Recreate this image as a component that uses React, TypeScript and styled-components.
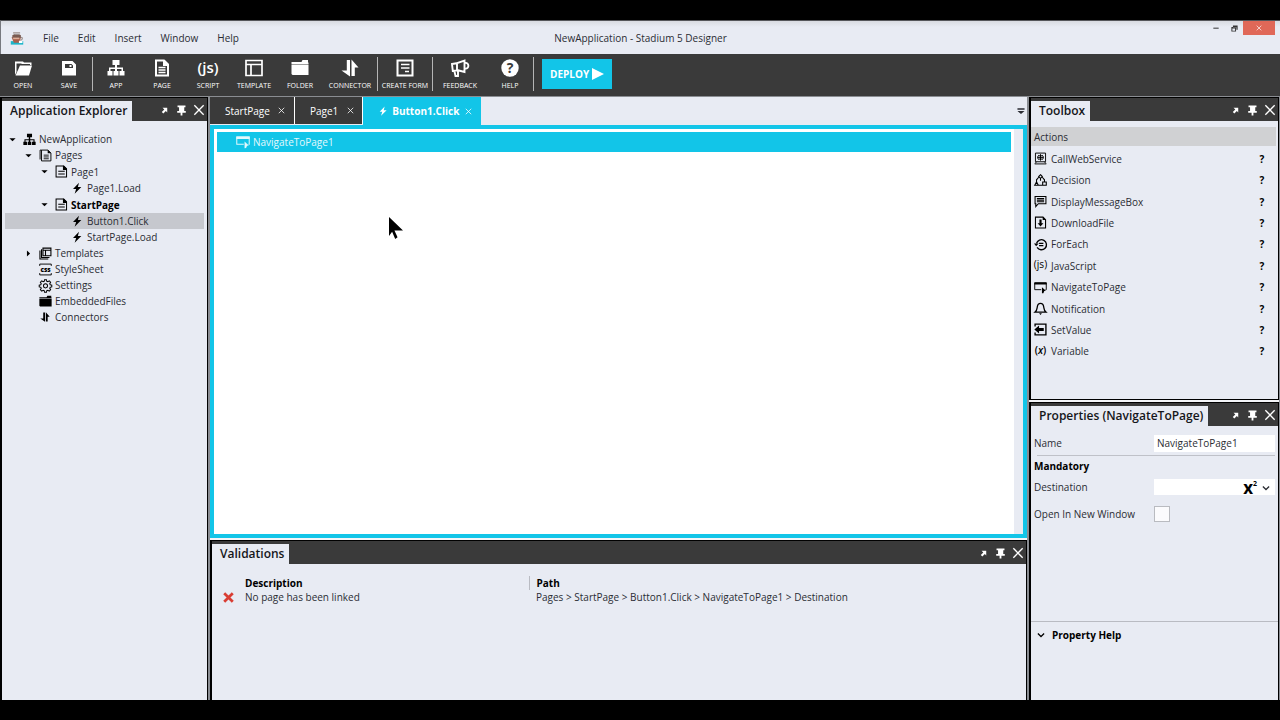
import React from 'react';
import styled, { createGlobalStyle, css } from 'styled-components';

const C = {
  bg: '#e8ebf3',
  dark: '#3a3a3a',
  cyan: '#12c5e8',
  text: '#2b2d33',
  select: '#c6c8ce',
};

const GlobalStyle = createGlobalStyle`
  *, *::before, *::after { box-sizing: border-box; }
  body {
    margin: 0;
    background: #000;
    color: ${C.text};
    font-family: 'Open Sans', 'Noto Sans', sans-serif;
    font-size: 10px;
    line-height: 16px;
  }
  button, input, select { font: inherit; color: inherit; margin: 0; }
  button { border: 0; padding: 0; background: none; cursor: pointer; }
  svg { display: block; flex: none; overflow: visible; }
`;

/* ---------- icons ---------- */

type IconName =
  | 'open' | 'save' | 'app' | 'page' | 'sheet' | 'template' | 'folder' | 'connector' | 'form'
  | 'feedback' | 'help' | 'pages' | 'templates' | 'css' | 'gear' | 'bolt' | 'web'
  | 'decision' | 'message' | 'download' | 'foreach' | 'js' | 'navigate' | 'bell'
  | 'setvalue' | 'variable' | 'close' | 'pin' | 'popout' | 'down' | 'right'
  | 'chevron' | 'play' | 'cup' | 'minimize' | 'restore' | 'overflow' | 'error' | 'pointer';

const line = { fill: 'none', stroke: 'currentColor' } as const;
const glyph = { fill: 'currentColor', textAnchor: 'middle' } as const;

const shapes: Record<IconName, React.ReactNode> = {
  open: <><path d="M1 16V2.500h8l1 1h7.500V6H16V5H8L7 4.500H2.500V13z" /><path d="M6 6.500h12l-3 10H1.500z" /></>,
  save: <path fillRule="evenodd" d="M2 2h10.500L16 5.500V16.500H2zM5 5v4h8V6.500L11.500 5z M9.500 6h2v2h-2z" />,
  app: <path d="M5.500 1h7v5H10v2.500h6V12h1.500v4.500h-5V12h2v-2H10v2h1.500v4.500h-5V12H8v-2H3.500v2h2v4.500h-5V12H2V8.500h6V6H5.500z" />,
  page: <><path {...line} strokeWidth="2" d="M3 1.500h8l4 4v11H3z" /><path d="M10 1h1.500L16 5.500V7h-6z" /><path {...line} strokeWidth="1.500" d="M5.500 8.500h7M5.500 11h7M5.500 13.500h7" /></>,
  sheet: <><path {...line} strokeWidth="1.400" d="M1.500 1.500h10.500l4 4v11H1.500z" /><path d="M11 1h1.500L16.500 5v2H11z" /><path {...line} strokeWidth="1.400" d="M4.500 8.500h9M4.500 12.500h9" /></>,
  template: <path {...line} strokeWidth="1.700" d="M1 1.500h16v15H1zM1 5.500h16M6 5.500v11" />,
  folder: <path d="M0.500 3h10l1-2H17v2.500h.5V5H.5zM.5 5.500h17V16H1.500L.5 15z" />,
  connector: <path d="M5.800 1h3.200v16.500L.5 11.500h5.300zM10.500 17V.5l7 8h-3.700V17z" />,
  form: <><path {...line} strokeWidth="2" d="M1.500 1.500h15v15h-15z" /><path {...line} strokeWidth="1.700" d="M5 5.500h8.500M5 9h8.500M9 12.500h4" /></>,
  feedback: <><path {...line} strokeWidth="1.900" d="M1 5l5-.8v7.300L1.800 12zM6 4.200L13.500 1.500v11.500L6 11M3.500 12.500l1 4.500h2.500V12" /><path {...line} strokeWidth="1.900" d="M14 4c4.500-1 4.500 6.500 0 5.500" /></>,
  help: <><circle cx="9" cy="9" r="8.700" /><text x="9" y="14" textAnchor="middle" fontSize="14" fontWeight="700" fill={C.dark}>?</text></>,
  pages: <><path {...line} strokeWidth="1.300" d="M1.500 14.500v-13h2M3.500 16.500v-15h9l4 4v11z" /><path d="M12 1.500l4.500 4.500H12z" /><path {...line} strokeWidth="1.200" d="M6.500 8.500h7M6.500 11h7M6.500 13.500h7" /></>,
  templates: <path {...line} strokeWidth="1.500" d="M5.500 1.500h11v10.500h-11zM5.500 4.500h11M9 4.500v7.500M3.500 3v11.500h11M1.300 5v11.700h11.500" />,
  css: <><path {...line} strokeWidth="1.300" d="M1 4V1.500h16V4M1 14v2.500h16V14" /><text x="9" y="12" {...glyph} fontSize="9" fontWeight="800">css</text></>,
  gear: <><path {...line} strokeWidth="1.400" d="M7.700 1h2.600l.5 2.200 1.500.6 1.900-1.200 1.900 1.900-1.200 1.900.6 1.500 2.200.5v2.600l-2.200.5-.6 1.500 1.200 1.900-1.900 1.900-1.900-1.200-1.500.6-.5 2.200H7.700l-.5-2.200-1.500-.6-1.900 1.200-1.900-1.900 1.200-1.900-.6-1.500L.3 11V8.400l2.200-.5.6-1.500-1.200-1.900 1.900-1.900 1.900 1.200 1.500-.6z" /><circle {...line} strokeWidth="1.400" cx="9" cy="9.500" r="2.800" /></>,
  bolt: <path d="M12 1L3 10.500h4.700L5.500 17.500 15.500 7.500h-5.200z" />,
  web: <path {...line} strokeWidth="1.300" d="M2 1.500h14v12H2zM1 16.500h16M3.500 13.500L1.500 16M14.500 13.500l2 2.500M5 7.500h8M9 3v9M6 5.200h6M6 9.800h6M6.500 4.500c-2 2-2 4 0 6M11.500 4.500c2 2 2 4 0 6" />,
  decision: <path {...line} strokeWidth="1.500" d="M9 1l2.500 2.500L9 6 6.500 3.500zM9 6v3.500M6.500 4.500L3.500 8v3M11.500 4.500l3 3.500v3M1 15.500l2.500-4.500L6 15.500zM12 11h5v4.500h-5zM6 15.500h6" />,
  message: <path {...line} strokeWidth="1.500" d="M1.500 2h15v10H6l-3.500 4v-4h-1zM4 5h10M4 7.200h10M4 9.400h10" />,
  download: <><path {...line} strokeWidth="1.500" d="M2 1.500h10.500L16 5v11.500H2z" /><path d="M12 1l4.500 4.500H12zM7.500 5h3v5H13l-4 4.500L5 10h2.500z" /></>,
  foreach: <><path {...line} strokeWidth="1.900" d="M3.500 7.500a7 7 0 1 1 .8 5.500M7 7.500h6M7 10.500h6" /><path d="M0 7.500h6.500L3 11.500z" /></>,
  js: <text x="9" y="13" {...glyph} fontSize="14">(js)</text>,
  navigate: <><path {...line} strokeWidth="1.300" d="M10 12H1V2.500h16V12h-1" /><path d="M.5 2h17v3H.5zM11 8.500l5.500 5-2.300.3-1.200 3-2 .2z" /></>,
  bell: <><path {...line} strokeWidth="1.800" d="M1.500 14C4 12 4 10 4.500 7 5 3.500 7 2 9 2s4 1.500 4.500 5c.5 3 .5 5 3 7z" /><path d="M7 15.500h4l-2 2.500z" /></>,
  setvalue: <><path {...line} strokeWidth="1.900" d="M1.500 5V1.500h15v15h-15V13" /><path d="M.5 9L7 3.500V7h6.500v4H7v3.500z" /></>,
  variable: <text x="9" y="13" {...glyph} fontSize="14" fontWeight="600">(<tspan fontStyle="italic">x</tspan>)</text>,
  close: <path {...line} strokeWidth="2" d="M2 2l14 14M16 2L2 16" />,
  pin: <path d="M2.500 1h13v2.500H13.500V10H16v2.500H10.500V17h-3v-4.500H2V10h3V3.500H2.500z" />,
  popout: <path d="M4 2h12v12l-3.500-3.500L6 17l-4-4 6.500-6.500z" />,
  down: <path d="M1 5.500h16l-8 8z" />,
  right: <path d="M5 1l8 8-8 8z" />,
  chevron: <path {...line} strokeWidth="2.800" d="M2 5.500l7 7 7-7" />,
  play: <path d="M0 0l18 9-18 9z" />,
  cup: <><path fill="#1bb5c9" d="M1 13h16v4.500H1z" /><path fill="#a8604c" d="M2 8h12l-1.500 7H5z" /><path fill="#7a5a50" d="M3 5.500c3-2 8-2 11 0V9H3z" /><path fill="#dfae98" d="M4 8.500h8v2H4z" /><path {...line} stroke="#9b8f8c" strokeWidth="1.500" d="M4 2.500h9M6 4.500h6M14 8c3 0 2 4-1 4" /><path fill="#fff" d="M11.500 12.500h4.500v3h-4.500z" /></>,
  minimize: <path d="M1 8h16v3H1z" />,
  restore: <path fillRule="evenodd" d="M5 1h12v11h-3V6H5zM1 5h12v12H1zM3.500 9v5.500h7V9z" />,
  overflow: <path d="M1 3h16v3H1zM1 9h16l-8 7z" />,
  error: <path {...line} strokeWidth="4.500" d="M2 2l14 14M16 2L2 16" />,
  pointer: <path d="M0 0v15.500l4-3.500 4 6 3-1.500-4-5.500H18z" />,
};

const Icon = ({ name, size = 13, height }: { name: IconName; size?: number; height?: number }) => (
  <svg width={size} height={height ?? size} viewBox="0 0 18 18" preserveAspectRatio="none" fill="currentColor" aria-hidden="true">
    {shapes[name]}
  </svg>
);

/* ---------- window frame ---------- */

const Window = styled.div`
  min-height: 100vh;
  padding: 20px 0;
  display: flex;
  flex-direction: column;
`;

const TitleBar = styled.header`
  height: 34px;
  display: grid;
  grid-template-columns: 1fr auto 1fr;
  align-items: center;
  background: linear-gradient(#d9dbe1, ${C.bg} 6px);
  border-top: 1px solid #55565a;
  border-left: 1px solid #77797f;
`;

const Menu = styled.nav`
  display: flex;
  align-items: center;
  gap: 19px;
  padding-left: 9px;
`;

const MenuItem = styled.button``;

const AppTitle = styled.h1`
  margin: 0;
  font-size: 10px;
  font-weight: 400;
`;

const WindowButtons = styled.div`
  align-self: start;
  justify-self: end;
  display: flex;
  margin-right: 5px;
`;

const WindowButton = styled.button<{ $danger?: boolean }>`
  width: ${p => (p.$danger ? 32 : 18)}px;
  height: 14px;
  display: grid;
  place-items: center;
  background: ${p => (p.$danger ? '#e06858' : 'none')};
  color: ${p => (p.$danger ? '#fff' : '#333')};
`;

const Toolbar = styled.div`
  height: 42px;
  padding-top: 3px;
  display: flex;
  align-items: flex-start;
  background: ${C.dark};
  color: #fff;
`;

const Tool = styled.button<{ $wide?: boolean }>`
  width: ${p => (p.$wide ? 54 : 46)}px;
  height: 36px;
  padding-top: 2px;
  display: flex;
  flex-direction: column;
  align-items: center;
  gap: 4px;
  font-size: 7px;
  line-height: 10px;
  white-space: nowrap;
`;

const ToolGlyph = styled.span`
  height: 18px;
  font-size: 15px;
  font-weight: 600;
  line-height: 16px;
`;

const ToolSeparator = styled.span`
  width: 1px;
  height: 34px;
  background: #b5b5b5;
`;

const Deploy = styled.button`
  height: 30px;
  margin: 2px 0 0 8px;
  padding: 0 8px;
  display: flex;
  align-items: center;
  gap: 3px;
  background: ${C.cyan};
  font-weight: 700;
`;

const Workspace = styled.div`
  flex: 1;
  display: grid;
  grid-template-columns: 208px minmax(0, 1fr) 250px;
  gap: 2px;
  padding-right: 1px;
  background: #8a8d92;
  border-top: 1px solid #8a8d92;
`;

const Column = styled.div`
  display: flex;
  flex-direction: column;
  gap: 2px;
  min-width: 0;
  background: #f4f5f8;
`;

/* ---------- panels ---------- */

const PanelBox = styled.section<{ $height?: number; $closed?: boolean }>`
  ${p => (p.$height ? css`height: ${p.$height}px;` : css`flex: 1;`)}
  display: flex;
  flex-direction: column;
  background: ${C.bg};
  border: 1px solid #000;
  border-left-width: 2px;
  border-bottom-width: ${p => (p.$closed ? 1 : 0)}px;
`;

const PanelHead = styled.div`
  height: 23px;
  padding-top: 3px;
  display: flex;
  align-items: flex-start;
  background: ${C.dark};
  color: #fff;
`;

const PanelTitle = styled.h2`
  margin: 0 auto 0 0;
  padding: 0 5px 0 8px;
  background: ${C.bg};
  color: #15161a;
  font-size: 12px;
  font-weight: 600;
  line-height: 20px;
  white-space: nowrap;
`;

const PanelButton = styled.button`
  width: 17px;
  height: 18px;
  display: grid;
  place-items: center;
`;

const Panel = ({ title, height, closed, children }: { title: string; height?: number; closed?: boolean; children: React.ReactNode }) => (
  <PanelBox $height={height} $closed={closed}>
    <PanelHead>
      <PanelTitle>{title}</PanelTitle>
      <PanelButton aria-label="Float"><Icon name="popout" size={7} /></PanelButton>
      <PanelButton aria-label="Pin"><Icon name="pin" size={11} /></PanelButton>
      <PanelButton aria-label="Close"><Icon name="close" size={12} /></PanelButton>
    </PanelHead>
    {children}
  </PanelBox>
);

/* ---------- application explorer ---------- */

const Tree = styled.ul`
  list-style: none;
  margin: 0;
  padding: 10px 3px 0;
`;

const TreeRow = styled.li<{ $level: number; $selected?: boolean; $bold?: boolean; $tall?: boolean }>`
  height: ${p => (p.$tall ? 17 : 16)}px;
  padding-left: ${p => p.$level * 16}px;
  display: flex;
  align-items: center;
  background: ${p => (p.$selected ? C.select : 'none')};
  font-weight: ${p => (p.$bold ? 700 : 400)};
  color: ${p => (p.$bold ? '#000' : C.text)};
`;

const TreeArrow = styled.span`
  width: 14px;
  display: grid;
  place-items: center;
  color: #000;
`;

const TreeIcon = styled.span`
  width: 20px;
  display: grid;
  place-items: center;
  color: #000;
`;

type Node = { label: string; icon: IconName; level: number; arrow?: 'down' | 'right'; bold?: boolean; selected?: boolean };

const nodes: Node[] = [
  { label: 'NewApplication', icon: 'app', level: 0, arrow: 'down' },
  { label: 'Pages', icon: 'pages', level: 1, arrow: 'down' },
  { label: 'Page1', icon: 'sheet', level: 2, arrow: 'down' },
  { label: 'Page1.Load', icon: 'bolt', level: 3 },
  { label: 'StartPage', icon: 'sheet', level: 2, arrow: 'down', bold: true },
  { label: 'Button1.Click', icon: 'bolt', level: 3, selected: true },
  { label: 'StartPage.Load', icon: 'bolt', level: 3 },
  { label: 'Templates', icon: 'templates', level: 1, arrow: 'right' },
  { label: 'StyleSheet', icon: 'css', level: 1 },
  { label: 'Settings', icon: 'gear', level: 1 },
  { label: 'EmbeddedFiles', icon: 'folder', level: 1 },
  { label: 'Connectors', icon: 'connector', level: 1 },
];

const treeIconSize = (icon: IconName) => (icon === 'bolt' ? 12 : icon === 'connector' ? 10 : 13);

/* ---------- editor ---------- */

const TabStrip = styled.div`
  height: 28px;
  display: flex;
  align-items: center;
  background: ${C.bg};
`;

const Tab = styled.div<{ $active?: boolean }>`
  height: ${p => (p.$active ? 28 : 27)}px;
  align-self: start;
  padding: 0 7px 0 15px;
  display: flex;
  align-items: center;
  gap: ${p => (p.$active ? 4 : 7)}px;
  border-right: 1px solid ${p => (p.$active ? C.cyan : '#fff')};
  background: ${p => (p.$active ? C.cyan : C.dark)};
  color: #fff;
  font-weight: ${p => (p.$active ? 700 : 400)};
`;

const TabLabel = styled.button`
  display: flex;
  align-items: center;
  gap: 4px;
`;

const TabClose = styled.button`
  width: 10px;
  height: 16px;
  display: grid;
  place-items: center;
`;

const TabOverflow = styled.button`
  width: 12px;
  height: 16px;
  margin-left: auto;
  display: grid;
  place-items: center;
`;

const Editor = styled.main`
  flex: 1;
  display: flex;
  flex-direction: column;
`;

const Canvas = styled.div`
  flex: 1;
  padding: 3px 12px 0 3px;
  border: 4px solid ${C.cyan};
  background: linear-gradient(${C.bg}, ${C.bg}) right / 9px 100% no-repeat #fff;
  position: relative;
`;

const ActionRow = styled.button`
  width: 100%;
  height: 20px;
  padding-left: 19px;
  display: flex;
  align-items: center;
  gap: 3px;
  background: ${C.cyan};
  color: #e3f8fc;
`;

const Pointer = styled.span`
  position: absolute;
  left: 175px;
  top: 88px;
  color: #000;
`;

/* ---------- validations ---------- */

const Issues = styled.table`
  width: 100%;
  margin-top: 12px;
  border-collapse: collapse;
  table-layout: fixed;
  text-align: left;

  th, td { padding: 0; line-height: 14px; }
  th { color: #000; font-weight: 700; }
  th:last-child { border-left: 1px solid #b9bbc2; }
  th:last-child, td:last-child { padding-left: 7px; }
  th:first-child, td:first-child { width: 33px; padding-left: 11px; }
  th:nth-child(2), td:nth-child(2) { width: 284px; }
  td:first-child { color: #d93d33; }
`;

/* ---------- toolbox ---------- */

const Group = styled.h3`
  height: 19px;
  margin: 6px 2px 0 0;
  padding-left: 3px;
  background: #d0d1d3;
  font-size: 10px;
  font-weight: 400;
  line-height: 20px;
`;

const ToolList = styled.ul`
  list-style: none;
  height: 214px;
  margin: 2px 0 0;
  padding: 0 12px 0 3px;
  display: flex;
  flex-direction: column;
`;

const ToolItem = styled.li`
  flex: 1;
  display: flex;
  align-items: center;
  gap: 4px;

  svg { color: #000; }
`;

const ToolHelp = styled.button`
  width: 8px;
  margin-left: auto;
  color: #000;
  font-weight: 700;
`;

const actions: { label: string; icon: IconName }[] = [
  { label: 'CallWebService', icon: 'web' },
  { label: 'Decision', icon: 'decision' },
  { label: 'DisplayMessageBox', icon: 'message' },
  { label: 'DownloadFile', icon: 'download' },
  { label: 'ForEach', icon: 'foreach' },
  { label: 'JavaScript', icon: 'js' },
  { label: 'NavigateToPage', icon: 'navigate' },
  { label: 'Notification', icon: 'bell' },
  { label: 'SetValue', icon: 'setvalue' },
  { label: 'Variable', icon: 'variable' },
];

/* ---------- properties ---------- */

const Form = styled.form`
  flex: 1;
  padding: 8px 3px 0;
`;

const Field = styled.div`
  display: grid;
  grid-template-columns: 1fr 121px;
  align-items: center;
  height: 18px;
`;

const Divider = styled.hr`
  height: 1px;
  margin: 3px 0 2px 3px;
  border: 0;
  background: #bfc1c8;
`;

const GroupName = styled.h3`
  margin: 0 0 4px;
  color: #000;
  font-size: 10px;
  font-weight: 700;
  line-height: 16px;
`;

const TextInput = styled.input`
  width: 100%;
  height: 17px;
  padding: 0 3px;
  border: 0;
  background: #fff;
`;

const SelectBox = styled.div`
  display: grid;
  grid-template-columns: 1fr auto 18px;
  align-items: center;
  height: 16px;
  position: relative;
  background: #fff;
`;

const Select = styled.select`
  position: absolute;
  inset: 0;
  width: 100%;
  border: 0;
  appearance: none;
  background: none;
`;

const Expression = styled.button`
  grid-column: 2;
  position: relative;
  display: flex;
  align-items: flex-start;
  height: 18px;
  color: #000;
  font-size: 17px;
  font-weight: 700;
  line-height: 17px;

  sup { font-size: 7px; line-height: 9px; }
`;

const SelectArrow = styled.span`
  grid-column: 3;
  position: relative;
  display: grid;
  place-items: center;
  pointer-events: none;
`;

const Checkbox = styled.input`
  appearance: none;
  width: 16px;
  height: 16px;
  border: 1px solid #b9bbc0;
  background: #fbfbfd;
`;

const CheckField = styled(Field)`
  margin-top: 9px;
`;

const HelpSection = styled.div`
  height: 79px;
  padding: 5px 6px 0;
  border-top: 1px solid #b9bbc2;
`;

const HelpToggle = styled.button`
  display: flex;
  align-items: center;
  gap: 7px;
  color: #000;
  font-weight: 700;
`;

const T = ({ icon, label, wide }: { icon: IconName; label: string; wide?: boolean }) => (
  <Tool $wide={wide}>
    {icon === 'js' ? <ToolGlyph>(js)</ToolGlyph> : <Icon name={icon} size={18} />}
    {label}
  </Tool>
);

export default function App() {
  return (
    <>
      <GlobalStyle />
      <Window>
        <TitleBar>
          <Menu>
            <Icon name="cup" size={14} />
            {['File', 'Edit', 'Insert', 'Window', 'Help'].map(m => <MenuItem key={m}>{m}</MenuItem>)}
          </Menu>
          <AppTitle>NewApplication - Stadium 5 Designer</AppTitle>
          <WindowButtons>
            <WindowButton aria-label="Minimize"><Icon name="minimize" size={6} /></WindowButton>
            <WindowButton aria-label="Restore"><Icon name="restore" size={7} /></WindowButton>
            <WindowButton $danger aria-label="Close"><Icon name="close" size={6} /></WindowButton>
          </WindowButtons>
        </TitleBar>

        <Toolbar>
          <T icon="open" label="OPEN" />
          <T icon="save" label="SAVE" />
          <ToolSeparator />
          <T icon="app" label="APP" />
          <T icon="page" label="PAGE" />
          <T icon="js" label="SCRIPT" />
          <T icon="template" label="TEMPLATE" />
          <T icon="folder" label="FOLDER" />
          <T icon="connector" label="CONNECTOR" wide />
          <ToolSeparator />
          <T icon="form" label="CREATE FORM" wide />
          <ToolSeparator />
          <T icon="feedback" label="FEEDBACK" wide />
          <T icon="help" label="HELP" />
          <ToolSeparator />
          <Deploy>DEPLOY <Icon name="play" size={12} /></Deploy>
        </Toolbar>

        <Workspace>
          <Column>
            <Panel title="Application Explorer">
              <Tree>
                {nodes.map(n => (
                  <TreeRow key={n.label} $level={n.level} $selected={n.selected} $bold={n.bold} $tall={n.icon === 'sheet'}>
                    <TreeArrow>{n.arrow && <Icon name={n.arrow} size={7} />}</TreeArrow>
                    <TreeIcon><Icon name={n.icon} size={treeIconSize(n.icon)} /></TreeIcon>
                    {n.label}
                  </TreeRow>
                ))}
              </Tree>
            </Panel>
          </Column>

          <Column>
            <Editor>
              <TabStrip>
                <Tab><TabLabel>StartPage</TabLabel><TabClose aria-label="Close StartPage"><Icon name="close" size={7} /></TabClose></Tab>
                <Tab><TabLabel>Page1</TabLabel><TabClose aria-label="Close Page1"><Icon name="close" size={7} /></TabClose></Tab>
                <Tab $active><TabLabel><Icon name="bolt" size={10} />Button1.Click</TabLabel><TabClose aria-label="Close Button1.Click"><Icon name="close" size={7} /></TabClose></Tab>
                <TabOverflow aria-label="More tabs"><Icon name="overflow" size={8} /></TabOverflow>
              </TabStrip>
              <Canvas>
                <ActionRow><Icon name="navigate" size={14} />NavigateToPage1</ActionRow>
                <Pointer><Icon name="pointer" size={14} height={22} /></Pointer>
              </Canvas>
            </Editor>
            <Panel title="Validations" height={160}>
              <Issues>
                <thead>
                  <tr><th aria-label="Severity" /><th>Description</th><th>Path</th></tr>
                </thead>
                <tbody>
                  <tr>
                    <td><Icon name="error" size={11} /></td>
                    <td>No page has been linked</td>
                    <td>Pages &gt; StartPage &gt; Button1.Click &gt; NavigateToPage1 &gt; Destination</td>
                  </tr>
                </tbody>
              </Issues>
            </Panel>
          </Column>

          <Column>
            <Panel title="Toolbox" height={303} closed>
              <Group>Actions</Group>
              <ToolList>
                {actions.map(a => (
                  <ToolItem key={a.label}>
                    <Icon name={a.icon} size={13} />
                    {a.label}
                    <ToolHelp aria-label={`Help on ${a.label}`}>?</ToolHelp>
                  </ToolItem>
                ))}
              </ToolList>
            </Panel>
            <Panel title="Properties (NavigateToPage)">
              <Form>
                <Field>
                  <label htmlFor="name">Name</label>
                  <TextInput id="name" defaultValue="NavigateToPage1" />
                </Field>
                <Divider />
                <GroupName>Mandatory</GroupName>
                <Field>
                  <label htmlFor="destination">Destination</label>
                  <SelectBox>
                    <Select id="destination"><option value="" /></Select>
                    <Expression type="button">x<sup>2</sup></Expression>
                    <SelectArrow><Icon name="chevron" size={8} /></SelectArrow>
                  </SelectBox>
                </Field>
                <CheckField>
                  <label htmlFor="new-window">Open In New Window</label>
                  <Checkbox id="new-window" type="checkbox" />
                </CheckField>
              </Form>
              <HelpSection>
                <HelpToggle><Icon name="chevron" size={8} />Property Help</HelpToggle>
              </HelpSection>
            </Panel>
          </Column>
        </Workspace>
      </Window>
    </>
  );
}
